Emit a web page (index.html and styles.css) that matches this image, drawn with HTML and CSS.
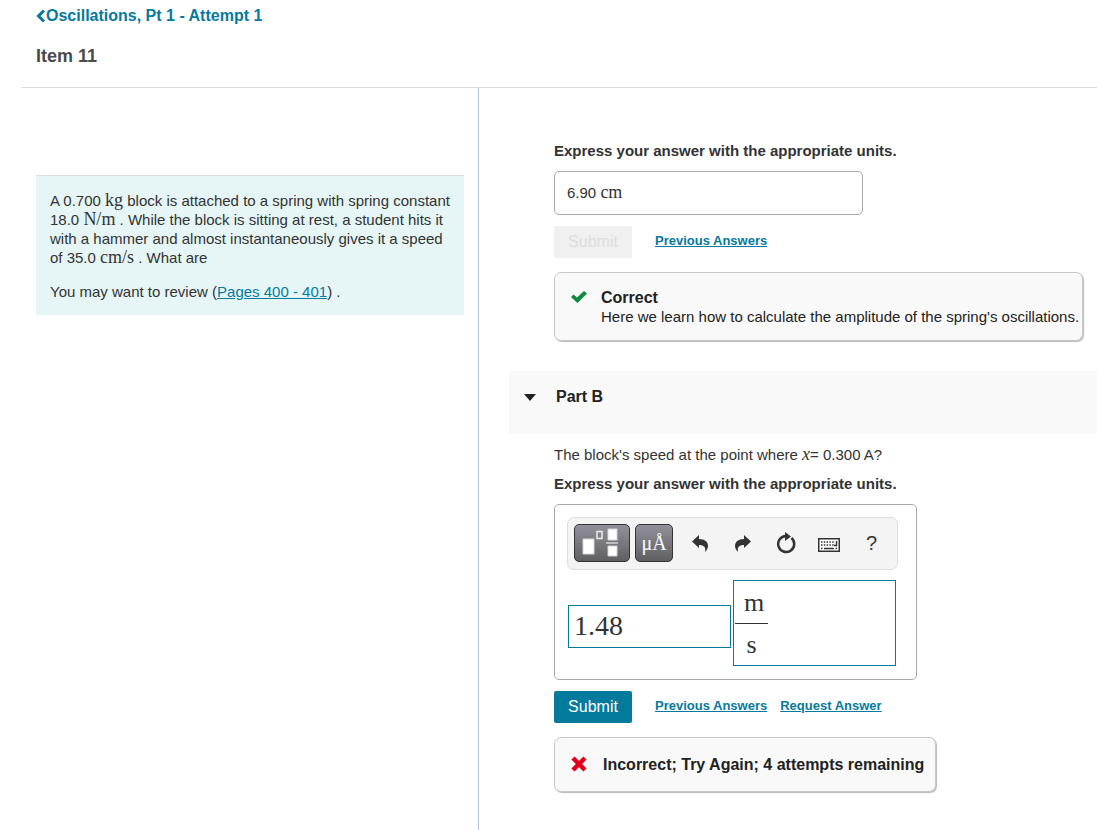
FILE: index.html
```html
<!DOCTYPE html>
<html lang="en">
<head>
<meta charset="utf-8">
<title>Oscillations, Pt 1 - Item 11</title>
<link rel="stylesheet" href="styles.css">
</head>
<body>
<div class="page">
  <header class="top">
    <a class="back" href="#"><svg class="chevron" viewBox="0 0 10 14" aria-hidden="true"><path d="M8 1.500 2.500 7 8 12.500" fill="none" stroke="currentColor" stroke-width="3"/></svg>Oscillations, Pt 1 - Attempt 1</a>
    <h1 class="item">Item 11</h1>
  </header>
  <div class="columns">
    <aside class="left">
      <section class="problem">
        <p>A 0.700 <span class="math">kg</span> block is attached to a spring with spring constant 18.0 <span class="math">N/m</span> . While the block is sitting at rest, a student hits it with a hammer and almost instantaneously gives it a speed of 35.0 <span class="math">cm/s</span> . What are</p>
        <p>You may want to review (<a href="#">Pages 400 - 401</a>) .</p>
      </section>
    </aside>
    <main class="right">
      <section class="part">
        <p class="instruct">Express your answer with the appropriate units.</p>
        <output class="given">6.90 <span class="math">cm</span></output>
        <div class="actions">
          <button class="submit" type="button" disabled>Submit</button>
          <a href="#">Previous Answers</a>
        </div>
        <div class="feedback correct">
          <svg class="mark" viewBox="0 0 16 16" aria-hidden="true"><path d="M0 8 2.500 5.500 6 8.500 13 2 16 4.500 6.500 14Z" fill="#0a8a3c"/></svg>
          <div>
            <h2>Correct</h2>
            <p>Here we learn how to calculate the amplitude of the spring's oscillations.</p>
          </div>
        </div>
      </section>
      <button class="part-head" type="button" aria-expanded="true"><svg class="caret" viewBox="0 0 12 7" aria-hidden="true"><path d="M0 0H12L6 7Z" fill="currentColor"/></svg>Part B</button>
      <section class="part part-b">
        <p class="question">The block's speed at the point where <i class="math var">x</i>= 0.300 A?</p>
        <p class="instruct">Express your answer with the appropriate units.</p>
        <div class="editor">
          <div class="toolbar">
            <button class="tool dark wide" type="button" aria-label="Templates"><svg width="54" height="36" viewBox="0 0 54 36"><path d="M8 14h11v15H8zM33 4h9v11h-9zM33 21h9v10h-9z" fill="#fff" stroke="#d5d5d8"/><path d="M22 6.500h5v7h-5z" fill="none" stroke="#eee" stroke-width="1.500"/><path d="M31 18h12" stroke="#fff"/></svg></button>
            <button class="tool dark units" type="button" aria-label="Units">μÅ</button>
            <button class="tool" type="button" aria-label="Undo"><svg width="16" height="17" viewBox="0 0 16 17"><path d="M0 6.500 7 0v4c6 0 9 3 9 7 0 2-1 4-3 6 1-5-1-7-6-7v3Z" fill="#333"/></svg></button>
            <button class="tool" type="button" aria-label="Redo"><svg width="16" height="17" viewBox="0 0 16 17"><path d="M16 6.500 9 0v4C3 4 0 7 0 11c0 2 1 4 3 6-1-5 1-7 6-7v3Z" fill="#333"/></svg></button>
            <button class="tool" type="button" aria-label="Reset"><svg width="20" height="22" viewBox="0 0 20 22"><path d="M15.500 6A8 8 0 1 1 10 4" fill="none" stroke="#333" stroke-width="2.500"/><path d="m9 0 6 4.500L9 9Z" fill="#333"/></svg></button>
            <button class="tool" type="button" aria-label="Keyboard shortcuts"><svg class="keys" width="22" height="14" viewBox="0 0 22 14"><path d="M.75.75h20.500v12.500H.75z" fill="#fff" stroke="#333" stroke-width="1.500"/><path d="M3 4h13M3 7h13" stroke="#333" stroke-width="1.500" stroke-dasharray="1.500 1.300"/><path d="M18.500 3v5M16 7.500h3M6 10.500h10M3 10.500h1.500M17.500 10.500H19" stroke="#333" stroke-width="1.500"/></svg></button>
            <button class="tool help" type="button" aria-label="Help">?</button>
          </div>
          <div class="fields">
            <input class="value" type="text" value="1.48" aria-label="Value">
            <div class="unit" role="textbox" tabindex="0" aria-label="Units"><span class="fraction"><span class="numerator">m</span><span class="denominator">s</span></span></div>
          </div>
        </div>
        <div class="actions">
          <button class="submit" type="button">Submit</button>
          <a href="#">Previous Answers</a>
          <a href="#">Request Answer</a>
        </div>
        <div class="feedback incorrect">
          <svg class="mark" viewBox="0 0 16 16" aria-hidden="true"><path d="m2 2 12 12m0-12-12 12" stroke="#e0001b" stroke-width="4.500"/></svg>
          <h2>Incorrect; Try Again; 4 attempts remaining</h2>
        </div>
      </section>
    </main>
  </div>
</div>
</body>
</html>
```
FILE: styles.css
```css
* { box-sizing: border-box; }
body { margin: 0; background: #fff; color: #333; font: 15px/19px "Liberation Sans", Arial, sans-serif; }
h1, h2, p { margin: 0; }
a { color: #047a9c; }
button { font-family: inherit; border: 0; padding: 0; }
svg { display: block; flex: none; }
.page { display: flex; flex-direction: column; min-height: 100vh; padding-left: 21px; }
.top { padding: 6px 15px 20px; border-bottom: 1px solid #ddd; }
.back { display: flex; align-items: center; width: max-content; font-size: 16px; line-height: 20px; font-weight: bold; text-decoration: none; }
.chevron { width: 10px; height: 14px; }
.item { margin-top: 20px; font-size: 18px; line-height: 21px; color: #4a4a4a; }
.columns { flex: 1; display: grid; grid-template-columns: minmax(0, 458fr) minmax(0, 618fr); }
.left { padding: 87px 14px 0 15px; border-right: 1px solid #b3c5dc; }
.problem { padding: 15px 13px 14px 14px; border-top: 1px solid #d8dfe2; background: #e6f6f6; }
.problem p + p { margin-top: 15px; }
.math { font-family: "Liberation Serif", serif; font-size: 18px; line-height: 16px; }
.right { padding-top: 53px; }
.part { padding: 0 13px 0 75px; }
.instruct { font-weight: bold; }
.given { display: block; max-width: 309px; margin-top: 11px; padding: 12px; border: 1px solid #aaa; border-radius: 5px; line-height: 18px; }
.actions { display: flex; align-items: center; gap: 13px; margin-top: 11px; }
.actions a { font-size: 13px; line-height: 18px; padding-bottom: 2px; font-weight: bold; }
.submit { width: 78px; height: 32px; margin-right: 10px; border-radius: 2px; background: #047a9c; color: #fff; font-size: 16px; }
.submit:disabled { background: #f0f0f0; color: #ddd; }
.feedback { display: flex; width: fit-content; max-width: 100%; border: 1px solid #c7c7c7; border-radius: 7px; background: #f9f9f9; box-shadow: 1px 1px 1px #bbb; color: #222; }
.feedback h2 { font-size: 16px; line-height: 18px; }
.mark { width: 16px; height: 16px; }
.correct { gap: 14px; margin-top: 14px; padding: 16px 3px 14px 16px; }
.incorrect { gap: 16px; margin-top: 14px; padding: 18px 11px 17px 16px; }
.part-head { display: flex; align-items: flex-start; gap: 20px; width: calc(100% - 30px); height: 63px; margin: 30px 0 0 30px; padding: 16px 15px; background: #f9f9f9; color: #222; font-size: 16px; line-height: 20px; font-weight: bold; text-align: left; }
.caret { width: 12px; height: 7px; margin-top: 7px; }
.part-b { padding-top: 11px; }
.var { line-height: 18px; }
.part-b .instruct { margin-top: 10px; }
.editor { max-width: 363px; margin-top: 11px; padding: 12px 12px 13px; border: 1px solid #aaa; border-radius: 5px; }
.toolbar { display: flex; align-items: center; max-width: 331px; height: 53px; padding: 5px 4px 6px 6px; border: 1px solid #dedede; border-radius: 7px; background: #f4f4f4; }
.tool { display: flex; align-items: center; justify-content: center; flex: 1; height: 38px; background: none; color: #333; }
.dark { flex: none; border: 1px solid #333; border-radius: 5px; background: linear-gradient(#92919b, #5f5f62); color: #fff; }
.wide { width: 56px; margin-right: 5px; }
.units { width: 38px; margin-right: 6px; font: 20px "Liberation Serif", serif; }
.keys { margin-top: 4px; }
.help { font-size: 20px; }
.fields { display: flex; align-items: center; gap: 2px; margin-top: 10px; padding-left: 1px; }
.value, .unit { width: 163px; border: 1px solid #047a9c; border-radius: 0; background: #fff; color: #333; font: 28px/32px "Liberation Serif", serif; }
.value { height: 43px; padding: 0 5px; margin-top: 6px; }
.unit { height: 86px; padding: 1px; }
.fraction { display: inline-flex; flex-direction: column; width: 33px; text-align: center; font-size: 26px; line-height: 41px; }
.numerator { padding-left: 5px; border-bottom: 1px solid #333; }
```
